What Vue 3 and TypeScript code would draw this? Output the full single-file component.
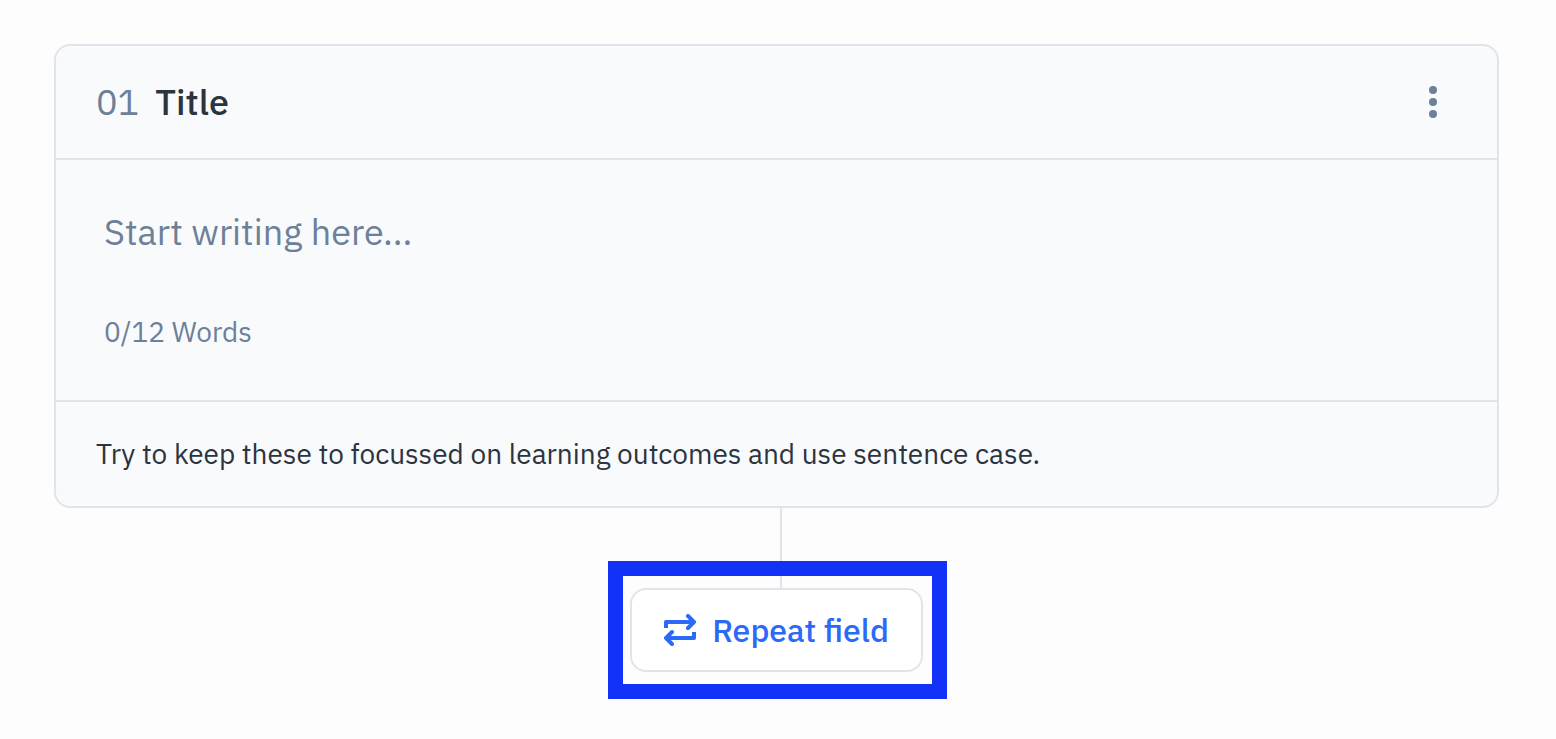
<script setup lang="ts">
import { computed, ref } from 'vue'

const maxWords = 12
const text = ref('')
const wordCount = computed(() => text.value.split(/\s+/).filter(Boolean).length)
</script>

<template>
  <main class="page">
    <section class="card">
      <header class="head">
        <span class="index">01</span>
        <h2 class="title"><label for="field">Title</label></h2>
        <button class="menu" type="button" aria-label="Field options">
          <svg width="8" height="32" viewBox="0 0 8 32" fill="currentColor" aria-hidden="true">
            <circle cx="4" cy="4" r="4" />
            <circle cx="4" cy="16" r="4" />
            <circle cx="4" cy="28" r="4" />
          </svg>
        </button>
      </header>
      <div class="body">
        <input id="field" v-model="text" class="field" type="text" placeholder="Start writing here..." />
        <p class="count">{{ wordCount }}/{{ maxWords }} Words</p>
      </div>
      <footer class="hint">Try to keep these to focussed on learning outcomes and use sentence case.</footer>
    </section>
    <div class="connector"></div>
    <div class="action">
      <button class="repeat" type="button">
        <svg width="32" height="32" viewBox="0 0 32 32" fill="none" stroke="currentColor" stroke-width="4" stroke-linejoin="round" aria-hidden="true">
          <path d="M2 14V8H29M30 18V24H3" />
          <path d="M24 2L30 8L24 14M8 18L2 24L8 30" stroke-linecap="round" />
        </svg>
        <span>Repeat field</span>
      </button>
      <div class="highlight"></div>
    </div>
  </main>
</template>

<style>
body {
  background: #fdfdfd;
}
</style>

<style scoped>
.page {
  display: flex;
  flex-direction: column;
  align-items: center;
  padding: 44px 57px 40px 54px;
  font-family: "IBM Plex Sans", Roboto, "Liberation Sans", sans-serif;
  color: #2b343f;
}
.card {
  box-sizing: border-box;
  width: 100%;
  border: 2px solid #e1e4ea;
  border-radius: 16px;
  background: #f9fafc;
}
.head {
  display: flex;
  align-items: center;
  padding: 32px 40px;
  border-bottom: 2px solid #e1e4ea;
  font-size: 36px;
  line-height: 48px;
}
.index {
  color: #6d8099;
}
.title {
  margin: 0 auto 0 16px;
  font-size: 36px;
  font-weight: 500;
}
.menu {
  display: flex;
  justify-content: center;
  width: 48px;
  padding: 8px 0;
  border: 0;
  background: none;
  color: #6d8099;
}
.body {
  padding: 48px;
}
.field {
  display: block;
  box-sizing: border-box;
  width: 100%;
  height: 48px;
  padding: 0;
  border: 0;
  outline: 0;
  background: none;
  font: inherit;
  font-size: 36px;
  line-height: 48px;
}
.field::placeholder {
  color: #6d8099;
  opacity: 1;
}
.count {
  margin: 56px 0 0;
  color: #6d8099;
  font-size: 28px;
  line-height: 40px;
}
.hint {
  padding: 32px 40px;
  border-top: 2px solid #e1e4ea;
  font-size: 28px;
  line-height: 40px;
}
.connector {
  width: 2px;
  height: 80px;
  margin-left: 8px;
  background: #e1e4ea;
}
.action {
  position: relative;
}
.repeat {
  display: flex;
  align-items: center;
  gap: 16px;
  padding: 20px 32px;
  border: 2px solid #e1e4ea;
  border-radius: 16px;
  background: #fff;
  color: #2b6af9;
  font: inherit;
  font-size: 32px;
  font-weight: 500;
  line-height: 40px;
}
.highlight {
  position: absolute;
  inset: -27px -24px -27px -22px;
  border: 15px solid #1431f8;
  pointer-events: none;
}
</style>
